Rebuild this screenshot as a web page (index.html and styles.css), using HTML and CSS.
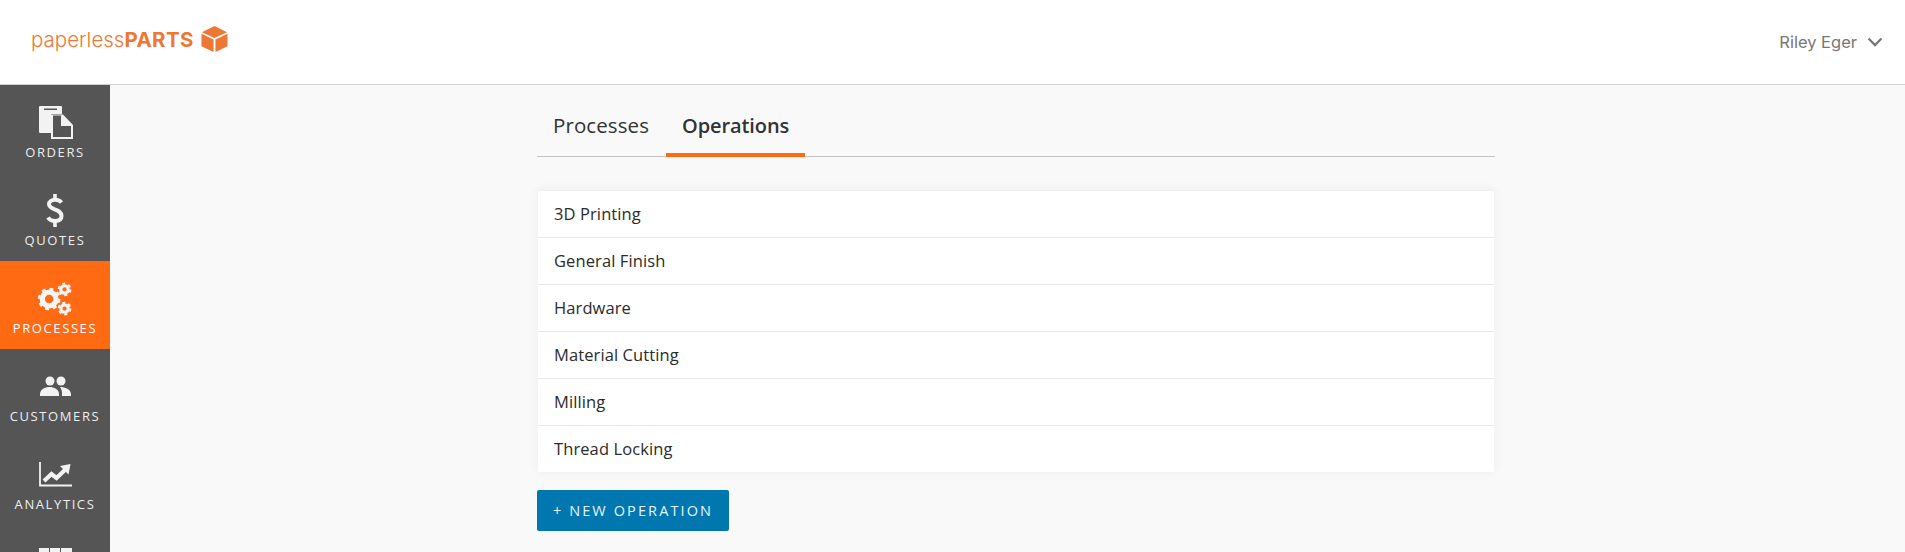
FILE: index.html
```html
<!DOCTYPE html>
<html lang="en">
<head>
<meta charset="utf-8">
<title>Operations</title>
<link rel="stylesheet" href="styles.css">
</head>
<body>
<header class="topbar">
  <div class="logo">
    <span class="logo-light">paperless</span><span class="logo-bold">PARTS</span>
    <svg class="logo-cube" width="27" height="28" viewBox="0 0 28 28"><path fill="#ee7733" d="M14 .5 27 7 14 13 1 7ZM.5 8.500 13 14.500V27.500L.5 21.500ZM27.500 8.500V21.500L15 27.500V14.500Z"/></svg>
  </div>
  <div class="user">
    <span>Riley Eger</span>
    <svg width="16" height="10" viewBox="0 0 16 10"><path d="M1.500 1.500 8 8 14.500 1.500" fill="none" stroke="#777" stroke-width="2.300"/></svg>
  </div>
</header>
<div class="body-row">
  <nav class="sidebar">
    <a class="nav-item">
      <svg class="nav-icon" viewBox="0 0 36 36"><path fill="#f2f2f2" d="M3 1H24a1 1 0 0 1 1 1V9H14V28H3a1 1 0 0 1-1-1V2a1 1 0 0 1 1-1Z"/><rect x="7" y="3.500" width="13" height="1.500" fill="#555"/><path fill="#f2f2f2" d="M14 9.500H26L36 20V34H14Z"/><path fill="#555" d="M16 10.500H24V21H34V32H16Z"/></svg>
      <span class="nav-label">ORDERS</span>
    </a>
    <a class="nav-item">
      <svg class="nav-icon" viewBox="0 0 36 36"><path d="M24.500 9.500C23 7.500 21 6.800 18 6.800 14.500 6.800 12 8.500 12 11.300 12 17.500 24.500 15 24.500 23 24.500 26.200 22 28 18 28 15 28 12.500 27 11 24.500" fill="none" stroke="#f2f2f2" stroke-width="4"/><path d="M18 1V7M18 28V34" stroke="#f2f2f2" stroke-width="3.600"/></svg>
      <span class="nav-label">QUOTES</span>
    </a>
    <a class="nav-item nav-active">
      <svg class="nav-icon" viewBox="1 0 34 34"><g fill="none" stroke="#f5f5f5"><circle cx="12.500" cy="17" r="6.500" stroke-width="5"/><circle cx="12.500" cy="17" r="9.200" stroke-width="3" stroke-dasharray="3.610 3.610"/><circle cx="27" cy="8" r="3.500" stroke-width="3"/><circle cx="27" cy="8" r="5.500" stroke-width="2" stroke-dasharray="2.880 2.880"/><circle cx="27" cy="26" r="3.500" stroke-width="3"/><circle cx="27" cy="26" r="5.500" stroke-width="2" stroke-dasharray="2.880 2.880"/></g></svg>
      <span class="nav-label">PROCESSES</span>
    </a>
    <a class="nav-item">
      <svg class="nav-icon" viewBox="0 0 36 36"><g fill="#f2f2f2"><circle cx="13" cy="12" r="4.500"/><circle cx="24" cy="12" r="4.500"/><path d="M3 27V25C3 20.500 8 18 12.500 18 17 18 22 20.500 22 25V27Z"/><path d="M23 18C28 18 34 20.500 34 25V27H25V24.500C25 22 24.500 20 23 18Z"/></g></svg>
      <span class="nav-label">CUSTOMERS</span>
    </a>
    <a class="nav-item">
      <svg class="nav-icon" viewBox="0 0 36 36"><path d="M3 5V28.500H35" fill="none" stroke="#f2f2f2" stroke-width="1.800"/><path d="M7 24 14.500 17 19.500 21 29 12" fill="none" stroke="#f2f2f2" stroke-width="4.200"/><path fill="#f2f2f2" d="M23 9 33.500 7 31.500 17.500Z"/></svg>
      <span class="nav-label">ANALYTICS</span>
    </a>
    <a class="nav-item">
      <svg class="nav-icon" viewBox="0 0 36 36"><g fill="#f2f2f2"><rect x="2" y="3" width="10" height="10"/><rect x="13" y="3" width="10" height="10"/><rect x="24" y="3" width="11" height="10"/></g></svg>
    </a>
  </nav>
  <main class="main">
    <div class="content">
      <div class="tabs">
        <a class="tab">Processes</a>
        <a class="tab tab-active">Operations</a>
      </div>
      <ul class="list">
        <li class="list-row">3D Printing</li>
        <li class="list-row">General Finish</li>
        <li class="list-row">Hardware</li>
        <li class="list-row">Material Cutting</li>
        <li class="list-row">Milling</li>
        <li class="list-row">Thread Locking</li>
      </ul>
      <button class="new-btn" type="button">+ NEW OPERATION</button>
    </div>
  </main>
</div>
</body>
</html>
```
FILE: styles.css
```css
html, body {
  margin: 0;
  height: 552px;
  overflow: hidden;
}
body {
  background: #f9f9f9;
  font-family: "Open Sans", "Liberation Sans", sans-serif;
  color: #2b2b2b;
}
.topbar {
  height: 84px;
  background: #fff;
  border-bottom: 1px solid #d2d2d2;
  display: flex;
  align-items: center;
  justify-content: space-between;
  padding: 0 22px 0 31px;
}
.logo {
  display: flex;
  align-items: center;
  color: #ee7733;
  font-family: "Inter", "Liberation Sans", sans-serif;
  font-size: 20.500px;
  margin-top: -6px;
}
.logo-light { font-weight: 300; }
.logo-bold { font-weight: 700; letter-spacing: .4px; }
.logo-cube { margin-left: 7px; }
.user {
  display: flex;
  align-items: center;
  gap: 10px;
  color: #777;
  font-family: "Inter", "Liberation Sans", sans-serif;
  font-size: 16.500px;
  margin-top: -1px;
}
.body-row {
  display: flex;
  height: 467px;
}
.sidebar {
  width: 110px;
  flex: none;
  background: #555;
  overflow: hidden;
}
.nav-item {
  height: 88px;
  box-sizing: border-box;
  padding-top: 20px;
  display: flex;
  flex-direction: column;
  align-items: center;
  color: #eee;
}
.nav-active { background: #ff6a13; color: #fff; }
.nav-icon { width: 36px; height: 36px; display: block; flex: none; }
.nav-label {
  margin-top: 3px;
  line-height: 16px;
  font-size: 13px;
  letter-spacing: 1.600px;
}
.main { flex: 1; padding-left: 427px; }
.content { width: 958px; }
.tabs {
  display: flex;
  gap: 1px;
  height: 71px;
  border-bottom: 1px solid #c4c4c4;
}
.tab {
  box-sizing: border-box;
  height: 72px;
  padding: 8px 16px 0;
  display: flex;
  align-items: center;
  font-size: 20.500px;
  letter-spacing: .1px;
  color: #333;
}
.tab-active {
  font-size: 20px;
  font-weight: 600;
  letter-spacing: -.1px;
  border-bottom: 4px solid #ff6a13;
  padding-top: 12px;
}
.list {
  list-style: none;
  margin: 33px 0 0 1px;
  padding: 0;
  width: 956px;
  background: #fff;
  box-shadow: 0 0 10px rgba(0, 0, 0, .06);
}
.list-row {
  height: 47px;
  box-sizing: border-box;
  padding: 0 0 1px 16px;
  display: flex;
  align-items: center;
  font-size: 16.500px;
  letter-spacing: .1px;
  border-top: 1px solid #e8e8e8;
}
.list-row:first-child { border-top-color: #f0f0f0; }
.new-btn {
  display: block;
  margin-top: 18px;
  width: 192px;
  height: 41px;
  padding: 0 0 1px;
  border: 0;
  border-radius: 2px;
  background: #0077ae;
  color: #e8f4fa;
  font-family: inherit;
  font-size: 14.500px;
  letter-spacing: 2.100px;
}
```
